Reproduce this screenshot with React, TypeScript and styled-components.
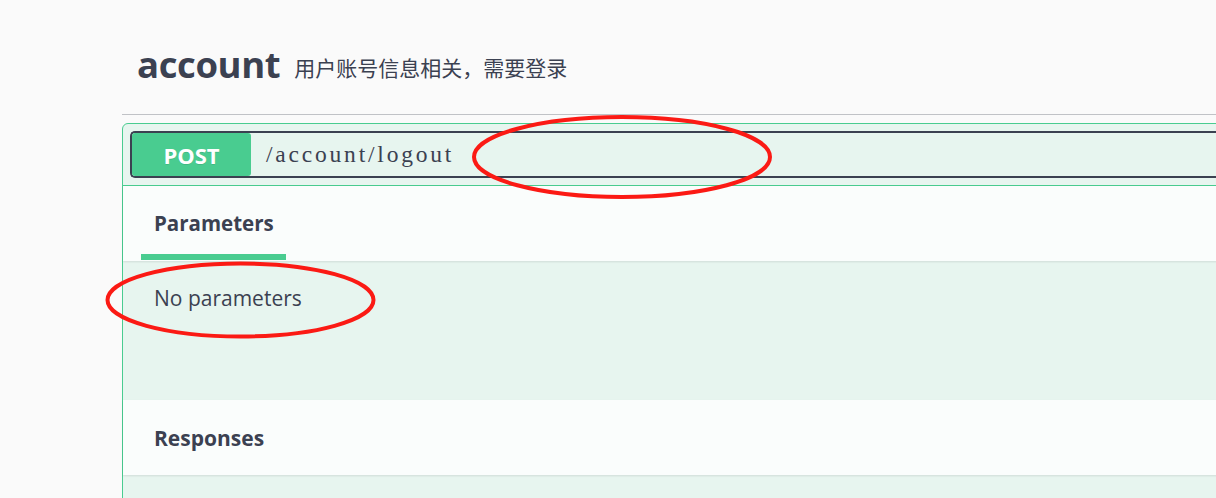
import styled, { createGlobalStyle } from "styled-components";

const GlobalStyle = createGlobalStyle`
  html, body {
    margin: 0;
    padding: 0;
    background: #fafafa;
    overflow: hidden;
  }
  body {
    font-family: "Open Sans", "Noto Sans CJK SC", sans-serif;
    color: #3b4151;
  }
`;

const Page = styled.div`
  position: relative;
  width: 1216px;
  height: 498px;
  overflow: hidden;
  padding-left: 122px;
  box-sizing: border-box;
`;

const Section = styled.div`
  width: 1200px;
`;

const TagHeader = styled.h3`
  display: flex;
  align-items: baseline;
  margin: 0;
  padding: 38px 0 19px 15px;
  border-bottom: 1px solid rgba(59, 65, 81, 0.3);
  font-size: 36.5px;
  font-weight: 700;
  line-height: 52px;
  letter-spacing: -0.4px;
  small {
    margin-left: 14px;
    font-family: "Noto Sans CJK SC", sans-serif;
    font-size: 21px;
    font-weight: 400;
    letter-spacing: 0;
    position: relative;
    top: -2px;
  }
`;

const Opblock = styled.div`
  margin-top: 8px;
  border: 1px solid #49cc90;
  border-radius: 6px 0 0 0;
  background: rgba(73, 204, 144, 0.1);
  height: 420px;
`;

const Summary = styled.div`
  padding: 7px;
  border-bottom: 1px solid #49cc90;
`;

const Control = styled.div`
  display: flex;
  align-items: center;
  height: 43px;
  border: 2px solid #3b4151;
  border-right: none;
  border-radius: 5px 0 0 5px;
`;

const Method = styled.span`
  display: flex;
  align-items: center;
  justify-content: center;
  width: 119px;
  height: 100%;
  border-radius: 3px;
  background: #49cc90;
  color: #fff;
  font-size: 22px;
  font-weight: 700;
  text-shadow: 0 1px 0 rgba(0, 0, 0, 0.1);
`;

const Path = styled.span`
  padding-left: 15px;
  font-family: "Liberation Serif", serif;
  font-size: 23.5px;
  letter-spacing: 2.8px;
  color: #3b4151;
`;

const SectionHeader = styled.div`
  display: flex;
  align-items: stretch;
  height: 75px;
  padding: 0 0 0 18px;
  background: rgba(255, 255, 255, 0.8);
  box-shadow: 0 1px 2px rgba(0, 0, 0, 0.1);
`;

const Tab = styled.div`
  display: flex;
  align-items: center;
  padding: 6px 12px 0 13px;
  margin-bottom: 1px;
  border-bottom: 6px solid #49cc90;
  font-size: 20.5px;
  font-weight: 700;
`;

const HeaderTitle = styled.h4`
  display: flex;
  align-items: center;
  margin: 0;
  padding-left: 13px;
  font-size: 21px;
  font-weight: 700;
`;

const Description = styled.div`
  height: 139px;
  padding: 22px 31px;
  box-sizing: border-box;
  p {
    margin: 0;
    font-size: 21px;
    line-height: 30px;
  }
`;

const Annotations = styled.svg`
  position: absolute;
  left: 0;
  top: 0;
  pointer-events: none;
`;

export default function App() {
  return (
    <>
      <GlobalStyle />
      <Page>
        <Section>
          <TagHeader>
            account<small>用户账号信息相关，需要登录</small>
          </TagHeader>
          <Opblock>
            <Summary>
              <Control>
                <Method>POST</Method>
                <Path>/account/logout</Path>
              </Control>
            </Summary>
            <SectionHeader>
              <Tab>Parameters</Tab>
            </SectionHeader>
            <Description>
              <p>No parameters</p>
            </Description>
            <SectionHeader>
              <HeaderTitle>Responses</HeaderTitle>
            </SectionHeader>
          </Opblock>
        </Section>
        <Annotations width="1216" height="498" viewBox="0 0 1216 498">
          <ellipse cx="622" cy="157" rx="148" ry="40" fill="none" stroke="#fb1a14" strokeWidth="4" />
          <ellipse cx="240.5" cy="300" rx="133" ry="36.5" fill="none" stroke="#fb1a14" strokeWidth="4" />
        </Annotations>
      </Page>
    </>
  );
}
